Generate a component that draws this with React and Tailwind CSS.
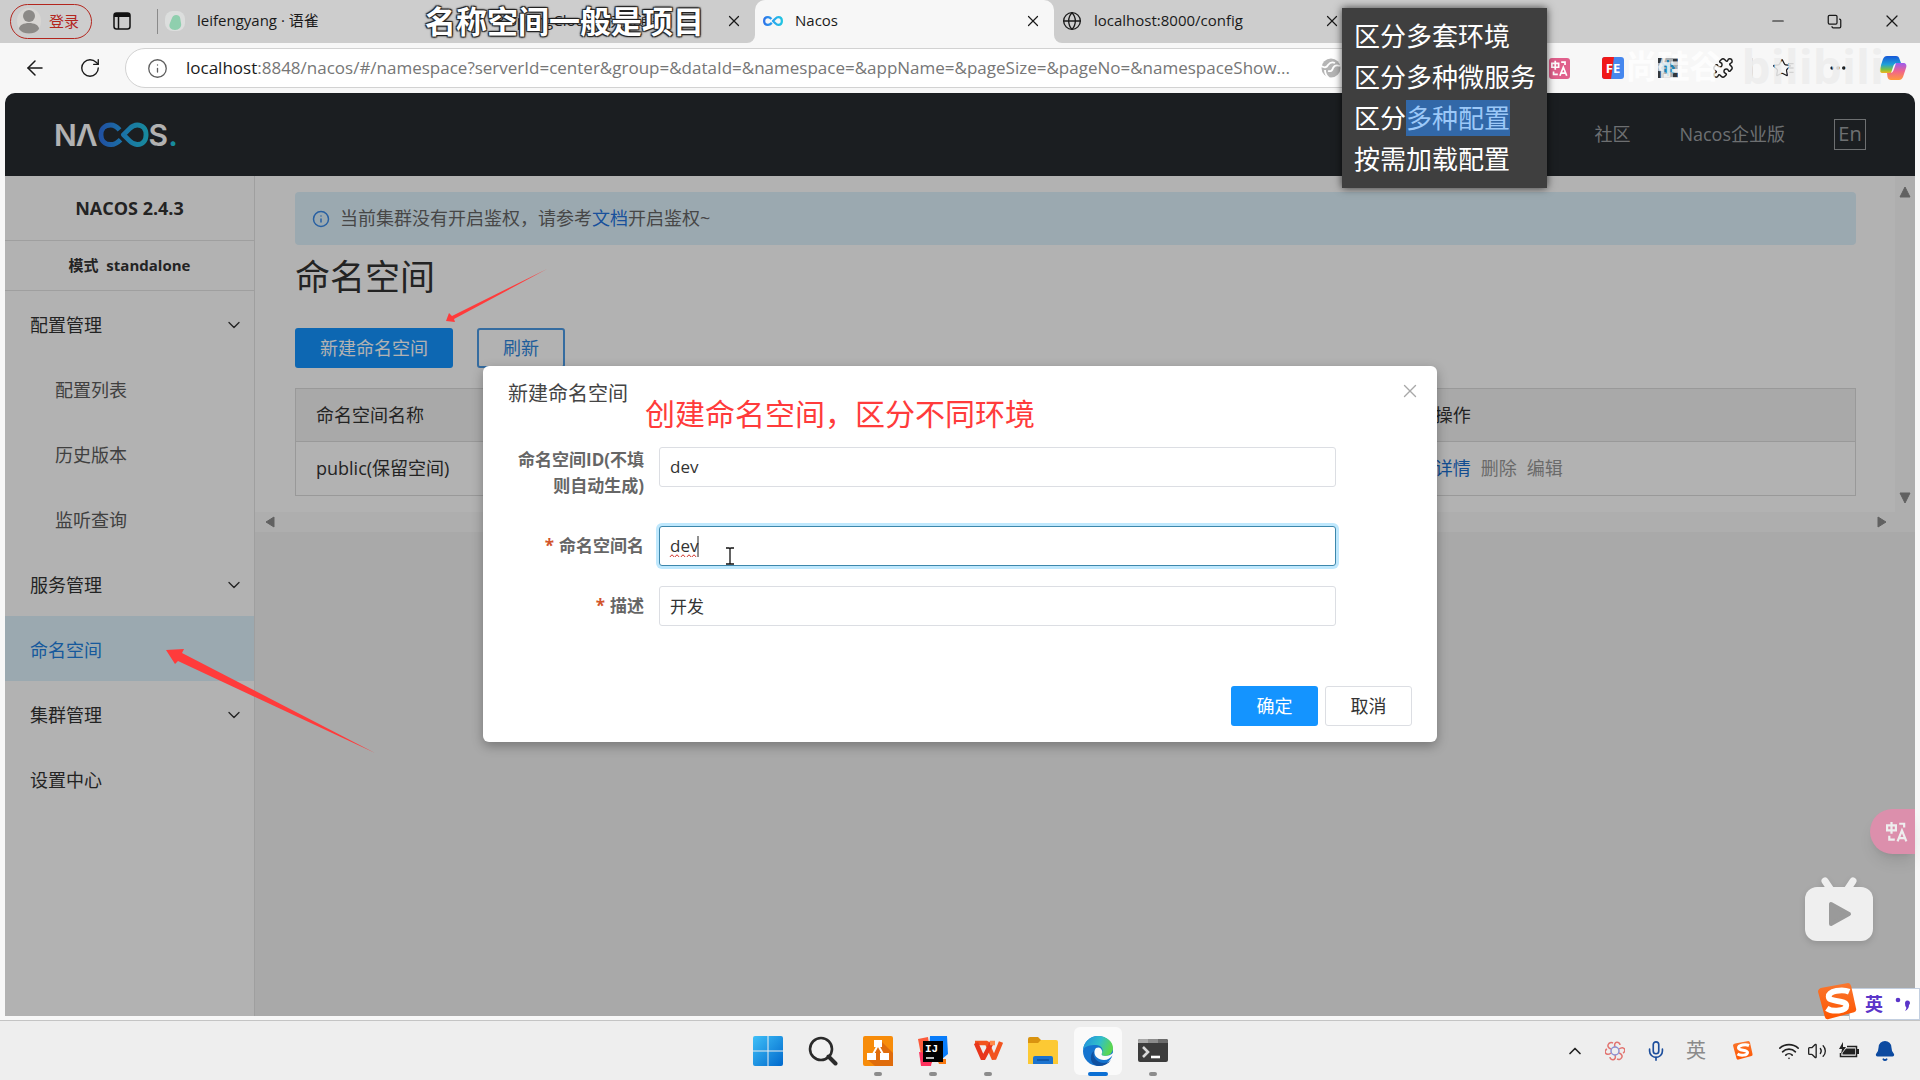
import React, { useState } from 'react';
import {
  ArrowLeft, RotateCw, Info, X, Minus, Copy, Globe, Puzzle, Star, Ellipsis,
  ChevronDown, ChevronUp, Mic, Wifi, Volume2, Bell,
} from 'lucide-react';

const InfinityMark = ({ id, className, width = 5 }) => (
  <svg viewBox="0 0 52 26" className={className} fill="none" aria-hidden="true">
    <defs>
      <linearGradient id={id} x1="0" x2="52" y1="0" y2="0" gradientUnits="userSpaceOnUse">
        <stop offset="0" stopColor="#2f6fe8" />
        <stop offset="0.5" stopColor="#27a4ee" />
        <stop offset="1" stopColor="#22c8e0" />
      </linearGradient>
    </defs>
    <path
      d="M22 8C19 4.500 17 3 13 3C7 3 3 7 3 13s4 10 10 10c4 0 7-2 10-5M26 13l6-6c2.500-2.500 4.500-4 8-4c5.500 0 9 4 9 10s-3.500 10-9 10c-3.500 0-5.500-1.500-8-4z"
      stroke={`url(#${id})`}
      strokeWidth={width}
      strokeLinejoin="round"
    />
  </svg>
);

const TranslateMark = ({ className }) => (
  <svg viewBox="0 0 20 20" className={className} fill="none" stroke="currentColor" strokeWidth="2" aria-hidden="true">
    <path d="M1 4h8v4.500H1zM5 1v10.500M12 2.500h4.500v3.500M3 13.500v3.500h5M10.500 18.500l4-10 4 10M12 15.500h5" />
  </svg>
);

const SogouMark = ({ className, id }) => (
  <svg viewBox="0 0 40 38" className={className} aria-hidden="true">
    <defs>
      <linearGradient id={id} x1="0" x2="0" y1="0" y2="1">
        <stop offset="0" stopColor="#f9772f" />
        <stop offset="1" stopColor="#ff5500" />
      </linearGradient>
    </defs>
    <path d="M4 5L31 0q2 0 3 3l5 23q1 3-2 4L11 37q-3 1-4-2L0 9q0-3 4-4z" fill={`url(#${id})`} />
    <path d="M32 9C25 6 11 8 11 14c0 6 18 3 18 9c0 6-14 7-20 3" stroke="#fff" strokeWidth="6" fill="none" />
  </svg>
);

const TABS = [
  { title: 'leifengyang · 语雀', icon: 'yuque', close: false },
  { title: '3.SpringCloud - 快速通关', icon: null, close: true },
  { title: 'Nacos', icon: 'nacos', close: true, active: true },
  { title: 'localhost:8000/config', icon: 'globe', close: true },
];

const TabIcon = ({ icon }) => {
  if (icon === 'yuque') {
    return (
      <svg viewBox="0 0 20 20" className="h-5 w-5">
        <rect width="20" height="20" rx="8" fill="#dcdedd" />
        <path d="M11 4c5 0 4 4 5 8s-2 7-6 7-7-3-5-7 2-8 6-8z" fill="#8fcfae" />
      </svg>
    );
  }
  if (icon === 'nacos') return <InfinityMark id="tab-mark" className="w-5" width={6} />;
  if (icon === 'globe') return <Globe className="h-5 w-5" strokeWidth={1.6} />;
  return <span className="w-5" />;
};

const Tab = ({ title, icon, close, active }) => (
  <div className={`relative flex w-[299px] items-center pb-px pl-2 pr-3 ${active ? 'rounded-t-[10px] bg-[#f7f7f7]' : ''}`}>
    {active && (
      <>
        <span className="absolute bottom-0 -left-2 h-2 w-2 bg-[#f7f7f7]"><span className="block h-2 w-2 rounded-br-lg bg-[#cdcdcd]" /></span>
        <span className="absolute bottom-0 -right-2 h-2 w-2 bg-[#f7f7f7]"><span className="block h-2 w-2 rounded-bl-lg bg-[#cdcdcd]" /></span>
      </>
    )}
    <TabIcon icon={icon} />
    <span className="ml-3 flex-1 truncate pb-px text-[15px]">{title}</span>
    {close && <button type="button" aria-label="关闭标签页"><X className="h-[18px] w-[18px]" strokeWidth={1.6} /></button>}
  </div>
);

const TabStrip = () => (
  <div className="flex h-[43px] bg-[#cdcdcd] text-[#1a1a1a]">
    <div className="flex w-[157px] items-center pl-[10px] pb-px">
      <button type="button" className="flex h-[35px] items-center gap-2 rounded-full border border-[#b3261e] pl-[6px] pr-3 text-[15px] text-[#b3261e]">
        <svg viewBox="0 0 24 28" className="h-7 w-6">
          <ellipse cx="12" cy="14" rx="12" ry="13" fill="#d8d6d3" />
          <circle cx="12" cy="9" r="6" fill="#8c8a87" />
          <path d="M2 22c0-8 20-8 20 0-4 6-16 6-20 0z" fill="#8c8a87" />
        </svg>
        登录
      </button>
      <svg viewBox="0 0 18 18" className="ml-[21px] h-[18px] w-[18px]" fill="none" stroke="#111" strokeWidth="1.500" aria-hidden="true">
        <rect x="1" y="1" width="16" height="16" rx="2.500" />
        <path d="M1 3h16" strokeWidth="4" />
        <path d="M5.500 4v13" />
      </svg>
    </div>
    <div className="my-[9px] -mr-px w-px bg-[#8a8a8a]" />
    {TABS.map((tab) => <Tab key={tab.title} {...tab} />)}
    <div className="ml-auto flex pb-px">
      <button type="button" aria-label="最小化" className="grid w-[57px] place-items-center"><Minus className="h-[18px] w-[18px]" strokeWidth={1.5} /></button>
      <button type="button" aria-label="还原" className="grid w-[57px] place-items-center"><Copy className="h-[15px] w-[15px] -scale-x-100 rotate-90" strokeWidth={2} /></button>
      <button type="button" aria-label="关闭" className="grid w-[57px] place-items-center"><X className="h-5 w-5" strokeWidth={1.5} /></button>
    </div>
  </div>
);

const CopilotMark = () => (
  <svg viewBox="0 0 28 28" className="h-7 w-7">
    <defs>
      <linearGradient id="cp-a" x1="0" y1="0" x2="0" y2="1">
        <stop offset="0" stopColor="#1657d8" />
        <stop offset="0.5" stopColor="#1fa0d8" />
        <stop offset="0.8" stopColor="#7cc242" />
        <stop offset="1" stopColor="#f5b51e" />
      </linearGradient>
      <linearGradient id="cp-b" x1="0" y1="0" x2="0" y2="1">
        <stop offset="0" stopColor="#9a5cf0" />
        <stop offset="0.5" stopColor="#f0658c" />
        <stop offset="1" stopColor="#ff9a3c" />
      </linearGradient>
    </defs>
    <path d="M8 2h9c2 0 3 1 3.500 3L22 9h-4c-2 0-3 1-4 4l-2 6H4c-3 0-4-2-3-5L4 5c1-2 2-3 4-3z" fill="url(#cp-a)" />
    <path d="M20 26h-8c-2 0-3-1-3.500-3L8 19h3c2 0 3-1 4-4l2-6h7c3 0 4 2 3 5l-3 9c-1 2-2 3-4 3z" fill="url(#cp-b)" />
  </svg>
);

const Tool = ({ label, children }) => (
  <button type="button" aria-label={label} className="grid w-[55px] place-items-center">{children}</button>
);

const AddressBar = () => (
  <div className="flex h-[50px] items-center bg-[#f7f7f7] text-[#1a1a1a]">
    <button type="button" aria-label="后退" className="ml-[23px]"><ArrowLeft className="h-6 w-6" strokeWidth={1.5} /></button>
    <button type="button" aria-label="刷新" className="ml-8"><RotateCw className="h-[22px] w-[22px]" strokeWidth={1.5} /></button>
    <div className="ml-6 mr-[30px] flex h-10 min-w-0 flex-1 items-center rounded-full border border-[#d2d2d2] bg-white px-[21px]">
      <Info className="h-[21px] w-[21px] shrink-0 text-[#5f5f5f]" strokeWidth={1.5} />
      <span className="ml-[18px] truncate text-[17px] text-[#767676]">
        <span className="text-[#1a1a1a]">localhost</span>
        :8848/nacos/#/namespace?serverId=center&amp;group=&amp;dataId=&amp;namespace=&amp;appName=&amp;pageSize=&amp;pageNo=&amp;namespaceShow...
      </span>
      <svg viewBox="0 0 20 20" className="ml-[31px] h-5 w-5 shrink-0" aria-hidden="true">
        <circle cx="10" cy="10" r="9.500" fill="#b5b5b5" />
        <path d="M0 8q5 3 7-1 3-4 7-2M19 8q-5-2-7 2-1 4-5 3M8 20q-4-3-4-8" stroke="#fff" strokeWidth="1.800" fill="none" />
      </svg>
    </div>
    <div className="flex shrink-0 items-center">
      <Tool label="翻译">
        <span className="ml-1 rounded-[3px] bg-[#e0608c] p-[2px] text-white"><TranslateMark className="h-[17px] w-[17px]" /></span>
      </Tool>
      <Tool label="FeHelper">
        <svg viewBox="0 0 22 22" className="h-[22px] w-[22px]">
          <rect width="22" height="22" rx="3" fill="#4587ee" />
          <path d="M3 0h9L9 22H3q-3 0-3-3V3q0-3 3-3z" fill="#f01818" />
          <text x="11" y="16" textAnchor="middle" fontSize="13" fontWeight="700" fill="#fff">FE</text>
        </svg>
      </Tool>
      <Tool label="扩展程序">
        <svg viewBox="0 0 20 20" className="h-5 w-5">
          <rect width="20" height="20" fill="#a9adb0" />
          <path d="M0 0h5v5H0zM15 15h5v5h-5zM0 13h6v7H0zM15 1h5v6h-5z" fill="#33383c" />
          <path d="M4 10q6-8 12 0-6 8-12 0zM10 2v16M4 5l12 10M16 5L4 15" stroke="#1c82b5" strokeWidth="2" fill="none" />
        </svg>
      </Tool>
      <Tool label="扩展"><Puzzle className="h-[22px] w-[22px]" strokeWidth={1.6} /></Tool>
      <span className="mx-0.5 h-5 w-px bg-[#dcdcdc]" />
      <Tool label="收藏夹">
        <span className="flex items-center">
          <Star className="h-5 w-5" strokeWidth={1.5} />
          <svg viewBox="0 0 6 14" className="-ml-1 h-3 w-[6px]" stroke="currentColor" strokeWidth="1.500"><path d="M0 2h6M1 7h5M1 12h5" /></svg>
        </span>
      </Tool>
      <Tool label="更多"><Ellipsis className="h-5 w-5" strokeWidth={2.4} /></Tool>
      <Tool label="Copilot"><CopilotMark /></Tool>
    </div>
  </div>
);

const NacosHeader = () => (
  <header className="flex h-[83px] shrink-0 items-center justify-between bg-[#272b30] px-[49px]">
    <a href="#home" aria-label="Nacos" className="flex items-center font-['Inter',sans-serif] text-[30px] font-semibold leading-8 text-white">
      <span>N</span>
      <span className="-ml-px">Λ</span>
      <InfinityMark id="header-mark" className="w-[51px]" />
      <span>S</span>
      <span className="text-[#22c8e0]">.</span>
    </a>
    <nav className="flex items-center gap-[49px] text-[18px] text-[#9da0a3]">
      <a href="#community">社区</a>
      <a href="#enterprise">Nacos企业版</a>
      <button type="button" className="h-[31px] w-8 border border-[#9da0a3] pb-px text-[20px] leading-6">En</button>
    </nav>
  </header>
);

const MENU = [
  { label: '配置管理', expandable: true },
  { label: '配置列表', child: true },
  { label: '历史版本', child: true },
  { label: '监听查询', child: true },
  { label: '服务管理', expandable: true },
  { label: '命名空间', active: true },
  { label: '集群管理', expandable: true },
  { label: '设置中心' },
];

const Sidebar = () => (
  <aside className="w-[250px] shrink-0 border-r border-[#e4e4e4] bg-white text-[#333]">
    <h2 className="h-[65px] border-b border-[#e4e4e4] text-center text-[18px] font-bold leading-[64px]">NACOS 2.4.3</h2>
    <h3 className="h-[50px] border-b border-[#e4e4e4] text-center text-[15px] font-bold leading-[49px]">
      模式&nbsp; standalone
    </h3>
    <ul>
      {MENU.map(({ label, expandable, child, active }) => (
        <li key={label}>
          <a
            href={`#${label}`}
            className={`flex h-[65px] items-center justify-between pr-[10px] pt-[3px] text-[18px] ${child ? 'pl-[50px] text-[#5c5c5c]' : 'pl-[25px]'} ${active ? 'bg-[#dff3fd] text-[#2080e0]' : ''}`}
          >
            {label}
            {expandable && <ChevronDown className="h-5 w-5" strokeWidth={1.6} />}
          </a>
        </li>
      ))}
    </ul>
  </aside>
);

const Arrow = ({ points }) => (
  <svg viewBox="0 0 12 12" className="h-3 w-3" fill="#8b8b8b" stroke="#8b8b8b" strokeWidth="1" strokeLinejoin="round" aria-hidden="true">
    <polygon points={points} />
  </svg>
);

const NamespacePage = () => (
  <main className="min-w-0 flex-1 bg-[#f3f3f3] text-[#333]">
    <div className="bg-white">
      <div className="flex">
        <div className="min-w-0 flex-1 pb-4 pl-10 pr-[39px] pt-4">
          <div className="flex h-[53px] items-center rounded-sm bg-[#dff3fd] px-[17px] text-[18px] text-[#666]">
            <Info className="mr-[10px] h-[18px] w-[18px] text-[#3a8ae8]" strokeWidth={2} />
            <p>当前集群没有开启鉴权，请参考<a href="#docs" className="text-[#2474e0]">文档</a>开启鉴权~</p>
          </div>
          <h1 className="mt-[7px] text-[35px] leading-[50px]">命名空间</h1>
          <div className="mt-[26px] flex gap-6">
            <button type="button" className="h-10 w-[158px] rounded-[3px] bg-[#1494ff] text-[18px] text-white">新建命名空间</button>
            <button type="button" className="h-10 w-[88px] rounded-[3px] border-2 border-[#4d9be6] text-[18px] text-[#2f87dd]">刷新</button>
          </div>
          <table className="mt-5 w-full border-collapse border border-[#dcdcdc] text-left text-[18px]">
            <thead>
              <tr className="h-[53px] border-b border-[#dcdcdc] bg-[#f2f2f2]">
                <th className="w-[72%] px-5 font-normal">命名空间名称</th>
                <th className="pl-4 font-normal">操作</th>
              </tr>
            </thead>
            <tbody>
              <tr className="h-[54px]">
                <td className="px-5">public(保留空间)</td>
                <td className="pl-4">
                  <div className="flex gap-[10px] text-[#999]">
                    <a href="#detail" className="text-[#1a6fd0]">详情</a>
                    <span>删除</span>
                    <span>编辑</span>
                  </div>
                </td>
              </tr>
            </tbody>
          </table>
        </div>
        <div className="flex w-5 flex-col items-center justify-between bg-[#fafafa] pb-2 pt-[10px]">
          <Arrow points="6,1 11,11 1,11" />
          <Arrow points="1,1 11,1 6,11" />
        </div>
      </div>
      <div className="flex h-5 items-center justify-between bg-[#fafafa] pl-2 pr-[26px]">
        <Arrow points="11,1 11,11 3,6" />
        <Arrow points="1,1 1,11 9,6" />
      </div>
    </div>
  </main>
);

const Field = ({ id, label, required, value, onChange, focused }) => (
  <div className="flex items-start">
    <label htmlFor={id} className={`w-[151px] shrink-0 pr-[15px] text-right text-[17px] font-bold text-[#666] ${required ? 'leading-10' : 'leading-[26px]'}`}>
      {required && <span className="mr-[5px] text-[#d2542b]">*</span>}
      {label}
    </label>
    <div className="relative mr-[76px] flex-1">
      <input
        id={id}
        value={value}
        onChange={(e) => onChange(e.target.value)}
        className={`block h-10 w-full rounded-[3px] border bg-white px-[10px] pb-[2px] text-[17px] text-[#333] outline-none ${focused ? 'border-[#3d87ac] ring-3 ring-[#bfe8fd]' : 'border-[#dcdee3]'}`}
      />
      {focused && (
        <svg viewBox="0 0 80 40" className="pointer-events-none absolute left-0 top-0 h-10 w-20" fill="none" aria-hidden="true">
          <path d="M11 31q2-4 4 0M16 31q2-4 4 0M22 31q2-4 4 0M28 31q2-4 4 0M33 31q2-4 4 0" stroke="#d23b32" />
          <path d="M39 10v21" stroke="#222" />
          <path d="M67 22h3q1 0 1 1 0-1 1-1h3M71 23v14M67 38h3q1 0 1-1 0 1 1 1h3" stroke="#111" strokeWidth="1.300" />
        </svg>
      )}
    </div>
  </div>
);

const NamespaceDialog = () => {
  const [form, setForm] = useState({ id: 'dev', name: 'dev', desc: '开发' });
  const update = (key) => (value) => setForm({ ...form, [key]: value });

  return (
    <div className="absolute inset-0 flex items-start justify-center overflow-hidden rounded-t-[10px] bg-black/30 pt-[273px]">
      <section role="dialog" aria-label="新建命名空间" className="relative w-[954px] rounded-md bg-white px-[25px] pb-4 pt-[14px] shadow-[0_4px_12px_rgba(0,0,0,0.3)]">
        <div className="flex items-start justify-between">
          <h2 className="text-[20px] leading-7 text-[#444]">新建命名空间</h2>
          <button type="button" aria-label="关闭对话框" className="-mr-[9px] text-[#a8a8a8]"><X className="h-[22px] w-[22px]" strokeWidth={1.5} /></button>
        </div>
        <p className="absolute left-[162px] top-[26px] text-[30px] leading-[44px] text-[#ff3b3b]">创建命名空间，区分不同环境</p>
        <form className="mt-[39px]" onSubmit={(e) => e.preventDefault()}>
          <div className="mb-[27px]">
            <Field id="ns-id" label="命名空间ID(不填则自动生成)" value={form.id} onChange={update('id')} />
          </div>
          <div className="space-y-5">
            <Field id="ns-name" label="命名空间名" required focused value={form.name} onChange={update('name')} />
            <Field id="ns-desc" label="描述" required value={form.desc} onChange={update('desc')} />
          </div>
          <div className="mt-[60px] flex justify-end gap-[7px] text-[18px]">
            <button type="submit" className="h-10 w-[87px] rounded-[3px] bg-[#1494ff] text-white">确定</button>
            <button type="button" className="h-10 w-[87px] rounded-[3px] border border-[#dcdee3] text-[#333]">取消</button>
          </div>
        </form>
      </section>
    </div>
  );
};

const IDEA = (
  <svg viewBox="0 0 32 32" className="h-8 w-8">
    <path d="M1 4l10-2 4 26-9 3z" fill="#fc5b3b" />
    <path d="M2 17l14 2-2 12H4z" fill="#fe315d" />
    <path d="M13 1h17l1 18-6 5-13-4z" fill="#087cfa" />
    <path d="M20 24h9v5h-7z" fill="#f97a12" />
    <rect x="6" y="6" width="20" height="21" fill="#000" />
    <text x="8" y="17" fontSize="11" fontWeight="700" fontFamily="Liberation Mono" fill="#fff">IJ</text>
    <path d="M9 23h8" stroke="#fff" strokeWidth="1.500" />
  </svg>
);

const APPS = [
  {
    name: '开始',
    icon: (
      <svg viewBox="0 0 30 30" className="h-[30px] w-[30px]">
        <defs>
          <linearGradient id="win" x1="0" y1="0" x2="1" y2="1">
            <stop offset="0" stopColor="#3fc0f8" />
            <stop offset="1" stopColor="#0068cc" />
          </linearGradient>
        </defs>
        <path d="M2 0h12.500v14.500H0V2q0-2 2-2zM15.500 0H28q2 0 2 2v12.500H15.500zM0 15.500h14.500V30H2q-2 0-2-2zM15.500 15.500H30V28q0 2-2 2H15.500z" fill="url(#win)" />
      </svg>
    ),
  },
  {
    name: '搜索',
    icon: (
      <svg viewBox="0 0 30 30" className="h-[30px] w-[30px]" fill="none" stroke="#2b2b2b">
        <circle cx="13" cy="13" r="11" strokeWidth="2.600" fill="#f2f2f2" />
        <path d="M20.500 20.500l7 7" strokeWidth="4" strokeLinecap="round" />
      </svg>
    ),
  },
  {
    name: 'draw.io',
    mark: 'bg-[#8c8c8c] w-2',
    icon: (
      <svg viewBox="0 0 30 30" className="h-[30px] w-[30px]">
        <rect width="30" height="30" rx="2" fill="#f78c0a" />
        <path d="M18 5l12 12v13H12L5 24z" fill="#df6c0c" />
        <path d="M15 9L9 20M15 9l6 11" stroke="#fff" strokeWidth="2" />
        <path d="M11 4h8v7h-8zM4 17h9v7H4zM17 17h9v7h-9z" fill="#fff" />
      </svg>
    ),
  },
  { name: 'IntelliJ IDEA', mark: 'bg-[#8c8c8c] w-2', icon: IDEA },
  {
    name: 'WPS',
    mark: 'bg-[#8c8c8c] w-2',
    icon: (
      <svg viewBox="0 0 30 22" className="h-[22px] w-[30px]" fill="none" strokeWidth="4.500" strokeLinejoin="bevel">
        <path d="M2 3h12l7 16L28 2" stroke="#f2541f" />
        <path d="M3 3l7 16 9-17" stroke="#e8361c" />
        <path d="M17 3h5" stroke="#ff8a4a" />
      </svg>
    ),
  },
  {
    name: '文件资源管理器',
    icon: (
      <svg viewBox="0 0 30 28" className="h-7 w-[30px]">
        <path d="M2 0h8l3 3h15v8H0V2q0-2 2-2z" fill="#d9930f" />
        <path d="M0 6h10l3-3h15q2 0 2 2v22H0z" fill="#fcc934" />
        <path d="M5 27v-6q0-2 2-2h16q2 0 2 2v6z" fill="#1b73cf" />
        <path d="M9 23h12" stroke="#0d4f9c" strokeWidth="1.500" />
      </svg>
    ),
  },
  {
    name: 'Microsoft Edge',
    active: true,
    mark: 'bg-[#0b6fd4] w-5',
    icon: (
      <svg viewBox="0 0 30 30" className="h-[30px] w-[30px]">
        <defs>
          <linearGradient id="edge" x1="0" y1="0" x2="1" y2="0.3">
            <stop offset="0" stopColor="#1f8ce0" />
            <stop offset="0.6" stopColor="#31bfc9" />
            <stop offset="1" stopColor="#5bd652" />
          </linearGradient>
        </defs>
        <circle cx="15" cy="15" r="15" fill="#1574cf" />
        <path d="M0 14C1 5 8 0 15 0c9 0 15 6 15 12 0 5-4 8-8 8-3 0-4-1-3-3 2-4-1-8-6-8C7 9 2 10 0 14z" fill="url(#edge)" />
        <path d="M11 15c-2 6 3 12 10 12 3 0 5-1 7-3-3 4-7 6-12 6C9 30 6 23 9 17z" fill="#10509f" />
        <path d="M13 12c-4 5 0 12 8 12 4 0 6-2 8-4 2-1 1-2 1-3-2 2-5 3-8 3-3 0-4-1-3-3 1-3-2-7-6-5z" fill="#fafafa" />
      </svg>
    ),
  },
  {
    name: '终端',
    mark: 'bg-[#8c8c8c] w-2',
    icon: (
      <svg viewBox="0 0 30 24" className="h-6 w-[30px]">
        <rect width="30" height="23" rx="2" fill="#3c3c3c" />
        <path d="M2 0h8v4H0V2q0-2 2-2z" fill="#a8a8a8" />
        <path d="M10 0h10v4H10z" fill="#8b8b8b" />
        <path d="M20 0h8q2 0 2 2v2H20z" fill="#6b6b6b" />
        <path d="M5 8l5 5-5 5" stroke="#d8d8d8" strokeWidth="2.600" fill="none" />
        <path d="M13 18h9" stroke="#fff" strokeWidth="2.600" />
      </svg>
    ),
  },
];

const Taskbar = () => (
  <footer className="relative flex h-[60px] items-center justify-center border-t border-[#c4c4c4] bg-[#eee]">
    <div className="flex gap-[7px]">
      {APPS.map(({ name, icon, mark, active }) => (
        <button
          key={name}
          type="button"
          aria-label={name}
          className={`relative grid h-12 w-12 place-items-center rounded-md ${active ? 'bg-[#fafafa]' : ''}`}
        >
          {icon}
          {mark && <span className={`absolute -bottom-px h-1 rounded-full ${mark}`} />}
        </button>
      ))}
    </div>
    <div className="absolute inset-y-0 right-6 flex items-center text-[#222]">
      <ChevronUp className="mr-5 h-5 w-5" strokeWidth={2} />
      <svg viewBox="0 0 20 20" className="mr-[20px] h-5 w-5" fill="none" stroke="#e27470" strokeWidth="1.500">
        <path d="M10 6c-2-6 5-6 5-2M14 8c5-4 8 2 4 4M14 12c6 2 2 8-2 6M10 14c2 6-5 6-5 2M6 12c-5 4-8-2-4-4M6 8C0 6 4 0 8 2" />
        <circle cx="10" cy="10" r="4" stroke="#8d8fd0" />
      </svg>
      <Mic className="mr-[19px] h-[22px] w-[22px] text-[#1c4e9c]" strokeWidth={1.8} />
      <span className="mr-[27px] text-[20px] text-[#8a8a8a]">英</span>
      <SogouMark id="sogou-tray" className="mr-[25px] h-[19px] w-5" />
      <Wifi className="mr-[7px] h-[22px] w-[22px]" strokeWidth={1.8} />
      <Volume2 className="mr-[11px] h-5 w-5" strokeWidth={1.6} />
      <svg viewBox="0 0 22 18" className="mr-[14px] h-[18px] w-[22px]" aria-hidden="true">
        <path d="M9 4.500h9.500v10H2.500V11" fill="none" stroke="#222" strokeWidth="1.500" />
        <path d="M8 6.500h9v6H4.500V11z" fill="#222" />
        <path d="M19 7h2v5h-2z" fill="#222" />
        <path d="M5 0L1 7h3l-1 5 5-7H5z" fill="#222" />
      </svg>
      <Bell className="h-[22px] w-[22px] text-[#0c4aa0]" fill="currentColor" />
    </div>
  </footer>
);

// everything that floats above the browser window
const Overlays = () => (
  <div className="pointer-events-none absolute inset-0 overflow-hidden">
    <svg className="absolute left-0 top-0 h-[800px] w-[600px]" viewBox="0 0 600 800" fill="#ff3b3b" aria-hidden="true">
      <polygon points="446,321 449,313 452,316 547,269 454,319 455,322" />
      <polygon points="166,650 184,649 182,653 375,753 178,661 175,664" />
    </svg>

    <p className="absolute left-[425px] top-0 text-[31px] font-bold leading-[43px] text-white [text-shadow:1px_1px_1px_#222,-1px_-1px_1px_#222,1px_-1px_1px_#222,-1px_1px_1px_#222,0_0_3px_#444]">
      名称空间一般是项目
    </p>

    <div className="absolute right-9 top-8 flex items-center gap-5 font-bold leading-[68px]">
      <span className="text-[32px] text-white/80">尚硅谷</span>
      <span className="text-[46px] text-[#ededed]/90">bilibili</span>
    </div>

    <div className="absolute left-[1342px] top-2 w-[205px] whitespace-nowrap bg-[#3f3f3f] px-3 py-[8px] text-[26px] leading-[41px] text-white shadow-[0_0_8px_rgba(0,0,0,0.7)]">
      <p>区分多套环境</p>
      <p>区分多种微服务</p>
      <p>区分<mark className="bg-[#3268a8] text-[#9cc8f8]">多种配置</mark></p>
      <p>按需加载配置</p>
    </div>

    <div className="absolute right-[5px] top-[809px] flex h-[45px] w-[45px] items-center justify-center rounded-l-full bg-[#dc8fac] pl-2 text-[#eee] shadow-lg">
      <TranslateMark className="h-[22px] w-[22px]" />
    </div>

    <svg viewBox="0 0 68 66" className="absolute right-[47px] top-[877px] h-[66px] w-[68px] drop-shadow-md" aria-hidden="true">
      <path d="M20 4l6 9M48 4l-6 9" stroke="#efefef" strokeWidth="7" strokeLinecap="round" />
      <rect y="10" width="68" height="54" rx="12" fill="#efefef" />
      <path d="M26 27v20l18-10z" fill="#9a9a9a" stroke="#9a9a9a" strokeWidth="4" strokeLinejoin="round" />
    </svg>

    <div className="absolute right-0 top-[983px] flex items-end">
      <SogouMark id="sogou-bar" className="relative z-10 -mr-2 h-[37px] w-[39px]" />
      <div className="flex h-8 w-[71px] items-center gap-3 border border-[#c3cfe0] bg-white pl-[15px] text-[18px] font-bold text-[#5b35c9]">
        英
        <svg viewBox="0 0 16 16" className="h-4 w-4" fill="#5b35c9">
          <circle cx="3" cy="4" r="2.300" />
          <path d="M10 7a2.500 2.500 0 1 1 4 2q0 4-4 6 2-3 1-4-1-1-1-4z" />
        </svg>
      </div>
    </div>
  </div>
);

const App = () => (
  <div className="relative flex min-h-screen flex-col bg-[#f7f7f7] font-['Open_Sans','Noto_Sans_CJK_SC',sans-serif]">
    <TabStrip />
    <AddressBar />
    <div className="relative mx-[5px] mb-1 flex flex-1 flex-col overflow-hidden rounded-t-[10px]">
      <NacosHeader />
      <div className="flex flex-1">
        <Sidebar />
        <NamespacePage />
      </div>
      <NamespaceDialog />
    </div>
    <Taskbar />
    <Overlays />
  </div>
);

export default App;
